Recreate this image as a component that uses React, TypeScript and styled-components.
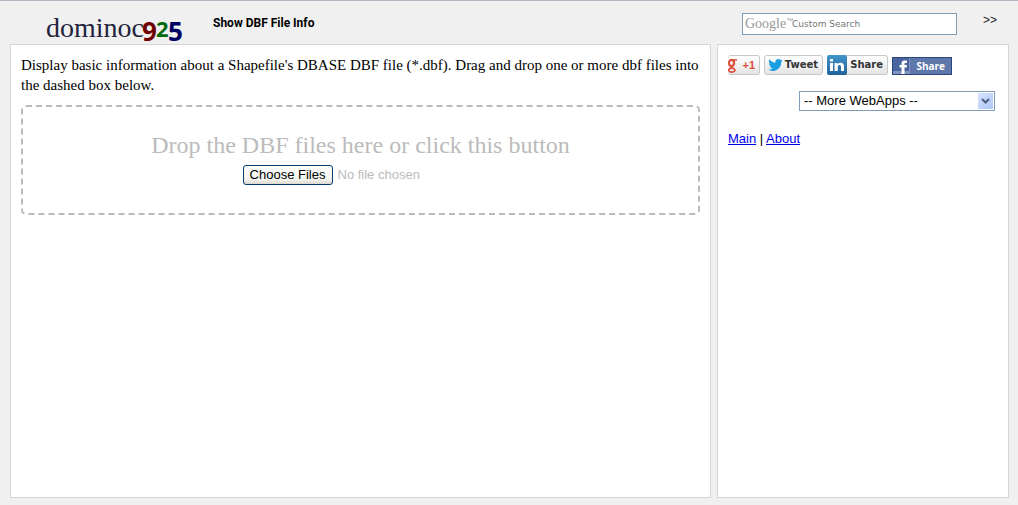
import React from "react";
import styled, { createGlobalStyle } from "styled-components";

const sans = `"Liberation Sans", Arial, sans-serif`;
const wide = `"DejaVu Sans", Verdana, sans-serif`;
const serif = `"Liberation Serif", "Times New Roman", serif`;

const GlobalStyle = createGlobalStyle`
  *, *::before, *::after { box-sizing: border-box; }
  body { margin: 0; background: #f0f0f0; color: #000; font-family: ${serif}; }
`;

const Page = styled.div`
  min-height: 100vh;
  display: grid;
  grid-template-columns: minmax(0, 1fr) 292px;
  grid-template-rows: 43px 1fr;
  column-gap: 6px;
  padding: 0 9px 7px 10px;
  border-top: 1px solid #b5b5c3;
`;

const Header = styled.header`
  display: flex;
  align-items: flex-start;
  gap: 30px;
  padding-left: 35px;
`;

const LogoLink = styled.a`
  display: block;
  padding-top: 8px;
  svg { display: block; overflow: visible; }
`;

const Title = styled.h1`
  margin: 0;
  padding-top: 14px;
  font: bold 12px/16px Roboto, ${sans};
`;

const Tools = styled.div`
  display: flex;
  justify-content: space-between;
  align-items: flex-start;
  padding: 12px 12px 0 25px;
`;

const SearchForm = styled.form`
  position: relative;
  display: flex;
`;

const SearchInput = styled.input`
  width: 215px;
  height: 22px;
  padding: 0 4px 0 49px;
  border: 1px solid #7f9db9;
  border-radius: 0;
  background: #fff;
  font: 9px/20px ${wide};
  &::placeholder { color: #777; opacity: 1; }
`;

const SearchBrand = styled.label`
  position: absolute;
  left: 3px;
  top: 2px;
  display: flex;
  align-items: flex-start;
  color: #999;
  font: 14px/18px ${serif};
  pointer-events: none;
  small { font: 7px/12px ${sans}; }
`;

const Expand = styled.button`
  padding: 0;
  border: 0;
  background: none;
  color: #222;
  font: 12px/14px ${sans};
`;

const Panel = styled.section`
  min-width: 0;
  padding: 10px;
  border: 1px solid #d6d6d6;
  background: #fff;
`;

const Intro = styled.p`
  margin: 0 0 10px;
  font-size: 15px;
  line-height: 20px;
`;

const DropZone = styled.div`
  display: flex;
  flex-direction: column;
  align-items: center;
  padding: 24px 10px 28px;
  border: 2px dashed #bbb;
  border-radius: 5px;
  color: #bbb;
`;

const DropLabel = styled.label`
  margin-bottom: 6px;
  font-size: 24px;
  line-height: 28px;
`;

const FileInput = styled.input`
  width: 236px;
  height: 20px;
  color: #bbb;
  font: 13px/20px ${sans};
  &::file-selector-button {
    width: 90px;
    height: 20px;
    margin: 0 5px 0 0;
    padding: 0;
    border: 1px solid #003c74;
    border-radius: 3px;
    background: linear-gradient(#fff, #f3f3ee 75%, #dcd8cf);
    color: #000;
    font: 13px/18px ${sans};
  }
`;

const ShareRow = styled.div`
  display: flex;
  align-items: flex-start;
  gap: 4px;
`;

const ShareButton = styled.button<{ $width: number }>`
  width: ${(p) => p.$width}px;
  height: 20px;
  display: flex;
  align-items: center;
  justify-content: space-between;
  padding: 0 4px 0 3px;
  border: 1px solid #c8c8c8;
  border-radius: 3px;
  background: linear-gradient(#fff, #e4e4e4);
  color: #333;
  font: bold 10px/18px ${wide};
  svg { display: block; flex: none; }
`;

const PlusOne = styled(ShareButton)`
  padding-left: 0;
  border-left-width: 0;
  color: #dd4b39;
  font: bold 11px/18px ${sans};
`;

const LinkedIn = styled(ShareButton)`
  padding-left: 0;
  border-left: 0;
`;

const Facebook = styled(ShareButton)`
  height: 18px;
  margin-top: 2px;
  padding: 0 6px 0 0;
  border-color: #29447e;
  border-radius: 0;
  background: #5f78ab;
  color: #fff;
  font: bold 10px/16px "Open Sans", ${sans};
`;

const SelectRow = styled.div`
  position: relative;
  display: flex;
  justify-content: flex-end;
  padding: 16px 3px 18px 0;
`;

const AppSelect = styled.select`
  appearance: none;
  width: 196px;
  height: 20px;
  padding: 0 20px 0 4px;
  border: 1px solid #7f9db9;
  border-radius: 0;
  background: #fff;
  color: #000;
  font: 13px/18px ${sans};
`;

const SelectArrow = styled.svg`
  position: absolute;
  right: 5px;
  top: 18px;
  pointer-events: none;
`;

const Links = styled.nav`
  font: 13px/20px ${sans};
  a { color: #0000ee; }
`;

const Logo = () => (
  <svg width="138" height="34" viewBox="0 0 138 34" role="img" aria-label="dominoc925">
    <text x="1" y="28" fill="#23233c" fontFamily={serif} fontSize="28">dominoc</text>
    <g fontWeight="bold" fontFamily={`"Open Sans", sans-serif`}>
      <text x="97" y="32" fontSize="26" fill="#700000">9</text>
      <text x="111" y="28" fontSize="22" fill="#006b0b">2</text>
      <text x="123" y="32" fontSize="26" fill="#000060">5</text>
    </g>
  </svg>
);

const GoogleIcon = () => (
  <svg width="10" height="18" viewBox="0 0 10 18" fill="none" stroke="#dd4b39">
    <ellipse cx="3.500" cy="7" rx="2.500" ry="3" strokeWidth="2" />
    <path d="M3.500 3.800H9" strokeWidth="1.400" />
    <path d="M6.500 4.500v4" strokeWidth="1.200" />
    <path d="M4 10q-1.500 1 0 1.800Q7.500 13 6.800 14.800 5.500 16.500 2.500 16 0 15.200 1 13.300 2 12 4.500 12.200" strokeWidth="1.600" />
  </svg>
);

const BirdIcon = () => (
  <svg width="15" height="12" viewBox="0 0 24 20">
    <path
      fill="#1b9fe0"
      d="M24 2.400a10 10 0 0 1-2.800.8A5 5 0 0 0 23.300.5a10 10 0 0 1-3.100 1.200 4.900 4.900 0 0 0-8.400 4.500A14 14 0 0 1 1.700 1a4.900 4.900 0 0 0 1.500 6.600A5 5 0 0 1 1 7v.1a4.900 4.900 0 0 0 3.900 4.800 5 5 0 0 1-2.200.1 4.900 4.900 0 0 0 4.600 3.400A10 10 0 0 1 0 17.500 14 14 0 0 0 21.500 5Q23 4 24 2.400z"
    />
  </svg>
);

const LinkedInIcon = () => (
  <svg width="20" height="20" viewBox="0 0 20 20">
    <defs>
      <linearGradient id="in" x2="0" y2="1">
        <stop stopColor="#4195cb" />
        <stop offset="1" stopColor="#1f6299" />
      </linearGradient>
    </defs>
    <rect width="20" height="20" rx="2" fill="url(#in)" />
    <path fill="#fff" d="M3 4h3v2.500H3zM3 8h3v8H3zM7.500 8h3v1.200C12 7 17 7 17 11v5h-3v-4.500c0-2-3.200-2-3.200 0V16H7.500z" />
  </svg>
);

const FacebookIcon = () => (
  <svg width="17" height="16" viewBox="0 0 17 16">
    <path fill="#4a659d" d="M0 0h16v16H0z" />
    <path fill="#8193bd" d="M0 13h16v3H0zM16 0h1v16h-1z" />
    <path fill="#fff" d="M8.500 16V9.500h-2V7h2V5.500c0-2 1-3 3-3H14V5h-1.500c-.8 0-1 .3-1 1v1H14l-.3 2.500h-2.200V16z" />
  </svg>
);

export default function App() {
  return (
    <>
      <GlobalStyle />
      <Page>
        <Header>
          <LogoLink href="#home"><Logo /></LogoLink>
          <Title>Show DBF File Info</Title>
        </Header>
        <Tools>
          <SearchForm>
            <SearchInput id="search" type="text" placeholder="Custom Search" />
            <SearchBrand htmlFor="search">Google<small>™</small></SearchBrand>
          </SearchForm>
          <Expand type="button">&gt;&gt;</Expand>
        </Tools>
        <Panel as="main">
          <Intro>
            Display basic information about a Shapefile's DBASE DBF file (*.dbf). Drag and drop one or
            more dbf files into the dashed box below.
          </Intro>
          <DropZone>
            <DropLabel htmlFor="files">Drop the DBF files here or click this button</DropLabel>
            <FileInput id="files" type="file" multiple />
          </DropZone>
        </Panel>
        <Panel as="aside">
          <ShareRow>
            <PlusOne type="button" $width={32}><GoogleIcon />+1</PlusOne>
            <ShareButton type="button" $width={59}><BirdIcon />Tweet</ShareButton>
            <LinkedIn type="button" $width={61}><LinkedInIcon />Share</LinkedIn>
            <Facebook type="button" $width={60}><FacebookIcon />Share</Facebook>
          </ShareRow>
          <SelectRow>
            <AppSelect aria-label="More WebApps">
              <option>-- More WebApps --</option>
            </AppSelect>
            <SelectArrow width="15" height="16" viewBox="0 0 15 16">
              <defs>
                <linearGradient id="arrow" x2="1" y2="1">
                  <stop stopColor="#d8e4ff" />
                  <stop offset="1" stopColor="#adc5f7" />
                </linearGradient>
              </defs>
              <rect width="15" height="16" rx="1" fill="url(#arrow)" />
              <path d="M4 6l3.500 3.500L11 6" fill="none" stroke="#4d6185" strokeWidth="2.200" />
            </SelectArrow>
          </SelectRow>
          <Links>
            <a href="#main">Main</a> | <a href="#about">About</a>
          </Links>
        </Panel>
      </Page>
    </>
  );
}
